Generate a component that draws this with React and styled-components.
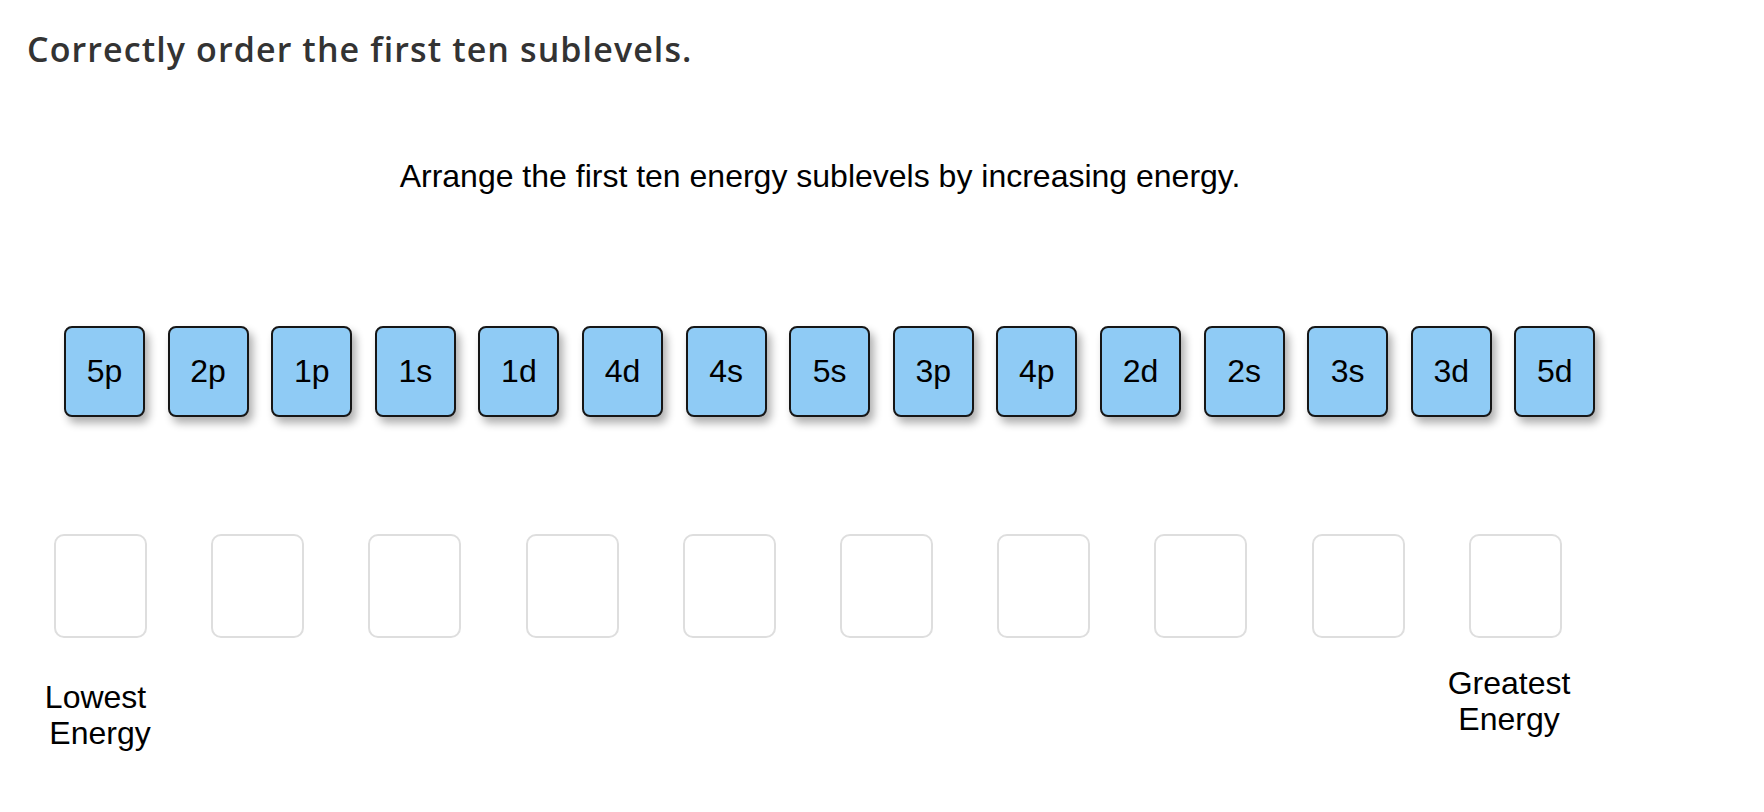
import React from 'react';
import styled, { createGlobalStyle } from 'styled-components';

const GlobalStyle = createGlobalStyle`
  body {
    margin: 0;
    background: #fff;
    font-family: "Liberation Sans", Arial, sans-serif;
  }
`;

const tiles = ['5p', '2p', '1p', '1s', '1d', '4d', '4s', '5s', '3p', '4p', '2d', '2s', '3s', '3d', '5d'];
const slotCount = 10;

function App() {
  return (
    <Page>
      <GlobalStyle />
      <Title>Correctly order the first ten sublevels.</Title>
      <Question>
        <Prompt>Arrange the first ten energy sublevels by increasing energy.</Prompt>
        <TileBank>
          {tiles.map((t) => (
            <Tile key={t}>{t}</Tile>
          ))}
        </TileBank>
        <SlotRow>
          {Array.from({ length: slotCount }).map((_, i) => (
            <Slot key={i} />
          ))}
        </SlotRow>
        <Labels>
          <EndLabel>{'Lowest \nEnergy'}</EndLabel>
          <EndLabel $raise>{'Greatest\nEnergy'}</EndLabel>
        </Labels>
      </Question>
    </Page>
  );
}

const Page = styled.div`
  width: 1764px;
  min-height: 812px;
`;

const Title = styled.h1`
  margin: 0;
  padding: 31px 0 0 27px;
  font-family: "Open Sans", Lato, sans-serif;
  font-weight: 600;
  font-size: 34px;
  line-height: 36px;
  letter-spacing: 1.1px;
  color: #333;
`;

const Question = styled.div`
  width: 1640px;
`;

const Prompt = styled.p`
  margin: 0;
  padding-top: 91px;
  text-align: center;
  font-size: 32px;
  line-height: 36px;
  color: #000;
`;

const TileBank = styled.div`
  display: flex;
  gap: 22.6px;
  padding: 132px 0 0 64px;
`;

const Tile = styled.div`
  width: 81px;
  height: 91px;
  box-sizing: border-box;
  display: flex;
  align-items: center;
  justify-content: center;
  background: #8fcbf5;
  border: 2px solid #161616;
  border-radius: 8px;
  box-shadow: 4px 6px 8px rgba(0, 0, 0, 0.32);
  font-size: 32px;
  color: #000;
`;

const SlotRow = styled.div`
  display: flex;
  gap: 64.2px;
  padding: 117px 0 0 54px;
`;

const Slot = styled.div`
  width: 93px;
  height: 104px;
  box-sizing: border-box;
  border: 2px solid #dedede;
  border-radius: 10px;
`;

const Labels = styled.div`
  display: flex;
  justify-content: space-between;
  align-items: flex-start;
  width: 1544px;
  padding: 41px 0 0 32.5px;
`;

const EndLabel = styled.div`
  width: 135px;
  margin-top: ${(p) => (p.$raise ? -14 : 0)}px;
  white-space: pre;
  text-align: center;
  font-size: 32px;
  line-height: 36px;
  color: #000;
`;

export default App;
